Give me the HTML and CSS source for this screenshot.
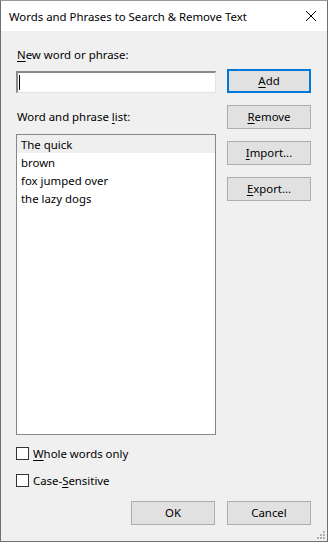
FILE: index.html
```html
<!DOCTYPE html>
<html lang="en">

<head>
    <meta charset="UTF-8">
    <meta name="viewport" content="width=device-width, initial-scale=1.0">
    <title>Words and Phrases to Search &amp; Remove Text</title>
    <link rel="stylesheet" href="styles.css">
</head>

<body>
    <div class="dialog">
        <div class="dialog-title">
            <span>Words and Phrases to Search &amp; Remove Text</span>
            <svg class="close" width="12" height="12" viewBox="0 0 12 12">
                <path d="M1 1 L11 11 M11 1 L1 11" stroke="#000" stroke-width="1" fill="none" />
            </svg>
        </div>
        <div class="dialog-body">
            <div class="main">
                <div class="left">
                    <div class="label"><u>N</u>ew word or phrase:</div>
                    <div class="input"><span class="caret"></span></div>
                    <div class="label label-list">Word and phrase <u>l</u>ist:</div>
                    <ul class="list">
                        <li class="selected">The quick</li>
                        <li>brown</li>
                        <li>fox jumped over</li>
                        <li>the lazy dogs</li>
                    </ul>
                    <label class="check check-first"><span class="box"></span><span><u>W</u>hole words only</span></label>
                    <label class="check"><span class="box"></span><span>Case-<u>S</u>ensitive</span></label>
                </div>
                <div class="right">
                    <a href="javascript:;" class="btn btn-default"><u>A</u>dd</a>
                    <a href="javascript:;" class="btn"><u>R</u>emove</a>
                    <a href="javascript:;" class="btn"><u>I</u>mport...</a>
                    <a href="javascript:;" class="btn"><u>E</u>xport...</a>
                </div>
            </div>
            <div class="footer">
                <a href="javascript:;" class="btn">OK</a>
                <a href="javascript:;" class="btn">Cancel</a>
            </div>
        </div>
        <!-- 右下角拖拽点 -->
        <svg class="grip" width="8" height="8" viewBox="0 0 8 8">
            <rect x="6" y="0" width="2" height="2" fill="#b0b0b0" />
            <rect x="3" y="3" width="2" height="2" fill="#b0b0b0" />
            <rect x="6" y="3" width="2" height="2" fill="#b0b0b0" />
            <rect x="0" y="6" width="2" height="2" fill="#b0b0b0" />
            <rect x="3" y="6" width="2" height="2" fill="#b0b0b0" />
            <rect x="6" y="6" width="2" height="2" fill="#b0b0b0" />
        </svg>
    </div>
</body>

</html>
```

FILE: styles.css
```css
* {
    margin: 0;
    padding: 0;
    box-sizing: border-box;
}

body {
    font-family: "Noto Sans", "Liberation Sans", sans-serif;
    font-size: 11.4px;
    color: #000;
    background-color: #fff;
}

a {
    text-decoration: none;
    color: #000;
}

u {
    text-decoration: underline;
    text-underline-offset: 2px;
}

.dialog {
    position: relative;
    width: 328px;
    height: 542px;
    border: 1px solid #6f6f6f;
    border-top-color: #9a9a9a;
    background-color: #f0f0f0;
}

.dialog-title {
    display: flex;
    align-items: center;
    justify-content: space-between;
    height: 30px;
    padding: 0 10px 0 8px;
    background-color: #fff;
}

.dialog-body {
    padding: 0 16px 0 15px;
}

.main {
    display: flex;
    gap: 11px;
}

.left {
    width: 200px;
}

.label {
    height: 16px;
    line-height: 16px;
    margin-top: 16px;
    padding-left: 1px;
}

.label-list {
    margin-top: 16px;
}

.input {
    height: 22px;
    margin-top: 8px;
    background-color: #fff;
    border: 1px solid #e3e3e3;
    border-top: 2px solid #8a8a8a;
    border-left: 2px solid #8a8a8a;
    padding: 2px 0 0 1px;
}

.caret {
    display: block;
    width: 1px;
    height: 15px;
    background-color: #000;
}

.list {
    list-style: none;
    height: 301px;
    margin-top: 9px;
    background-color: #fff;
    border: 1px solid #828790;
}

.list li {
    height: 18px;
    line-height: 19px;
    padding-left: 4px;
}

.list .selected {
    background-color: #efefef;
}

.check {
    display: flex;
    align-items: center;
    gap: 4px;
    height: 13px;
    margin-top: 14px;
}

.check-first {
    margin-top: 12px;
}

.check .box {
    width: 13px;
    height: 13px;
    background-color: #fff;
    border: 1px solid #333;
}

.right {
    display: flex;
    flex-direction: column;
    gap: 12px;
    width: 84px;
    padding-top: 38px;
}

.btn {
    display: block;
    width: 84px;
    height: 24px;
    line-height: 22px;
    text-align: center;
    background-color: #e1e1e1;
    border: 1px solid #adadad;
}

.btn-default {
    border: 2px solid #0078d7;
    line-height: 20px;
}

.footer {
    display: flex;
    justify-content: flex-end;
    gap: 12px;
    margin-top: 14px;
}

.grip {
    position: absolute;
    right: 2px;
    bottom: 2px;
}
```
